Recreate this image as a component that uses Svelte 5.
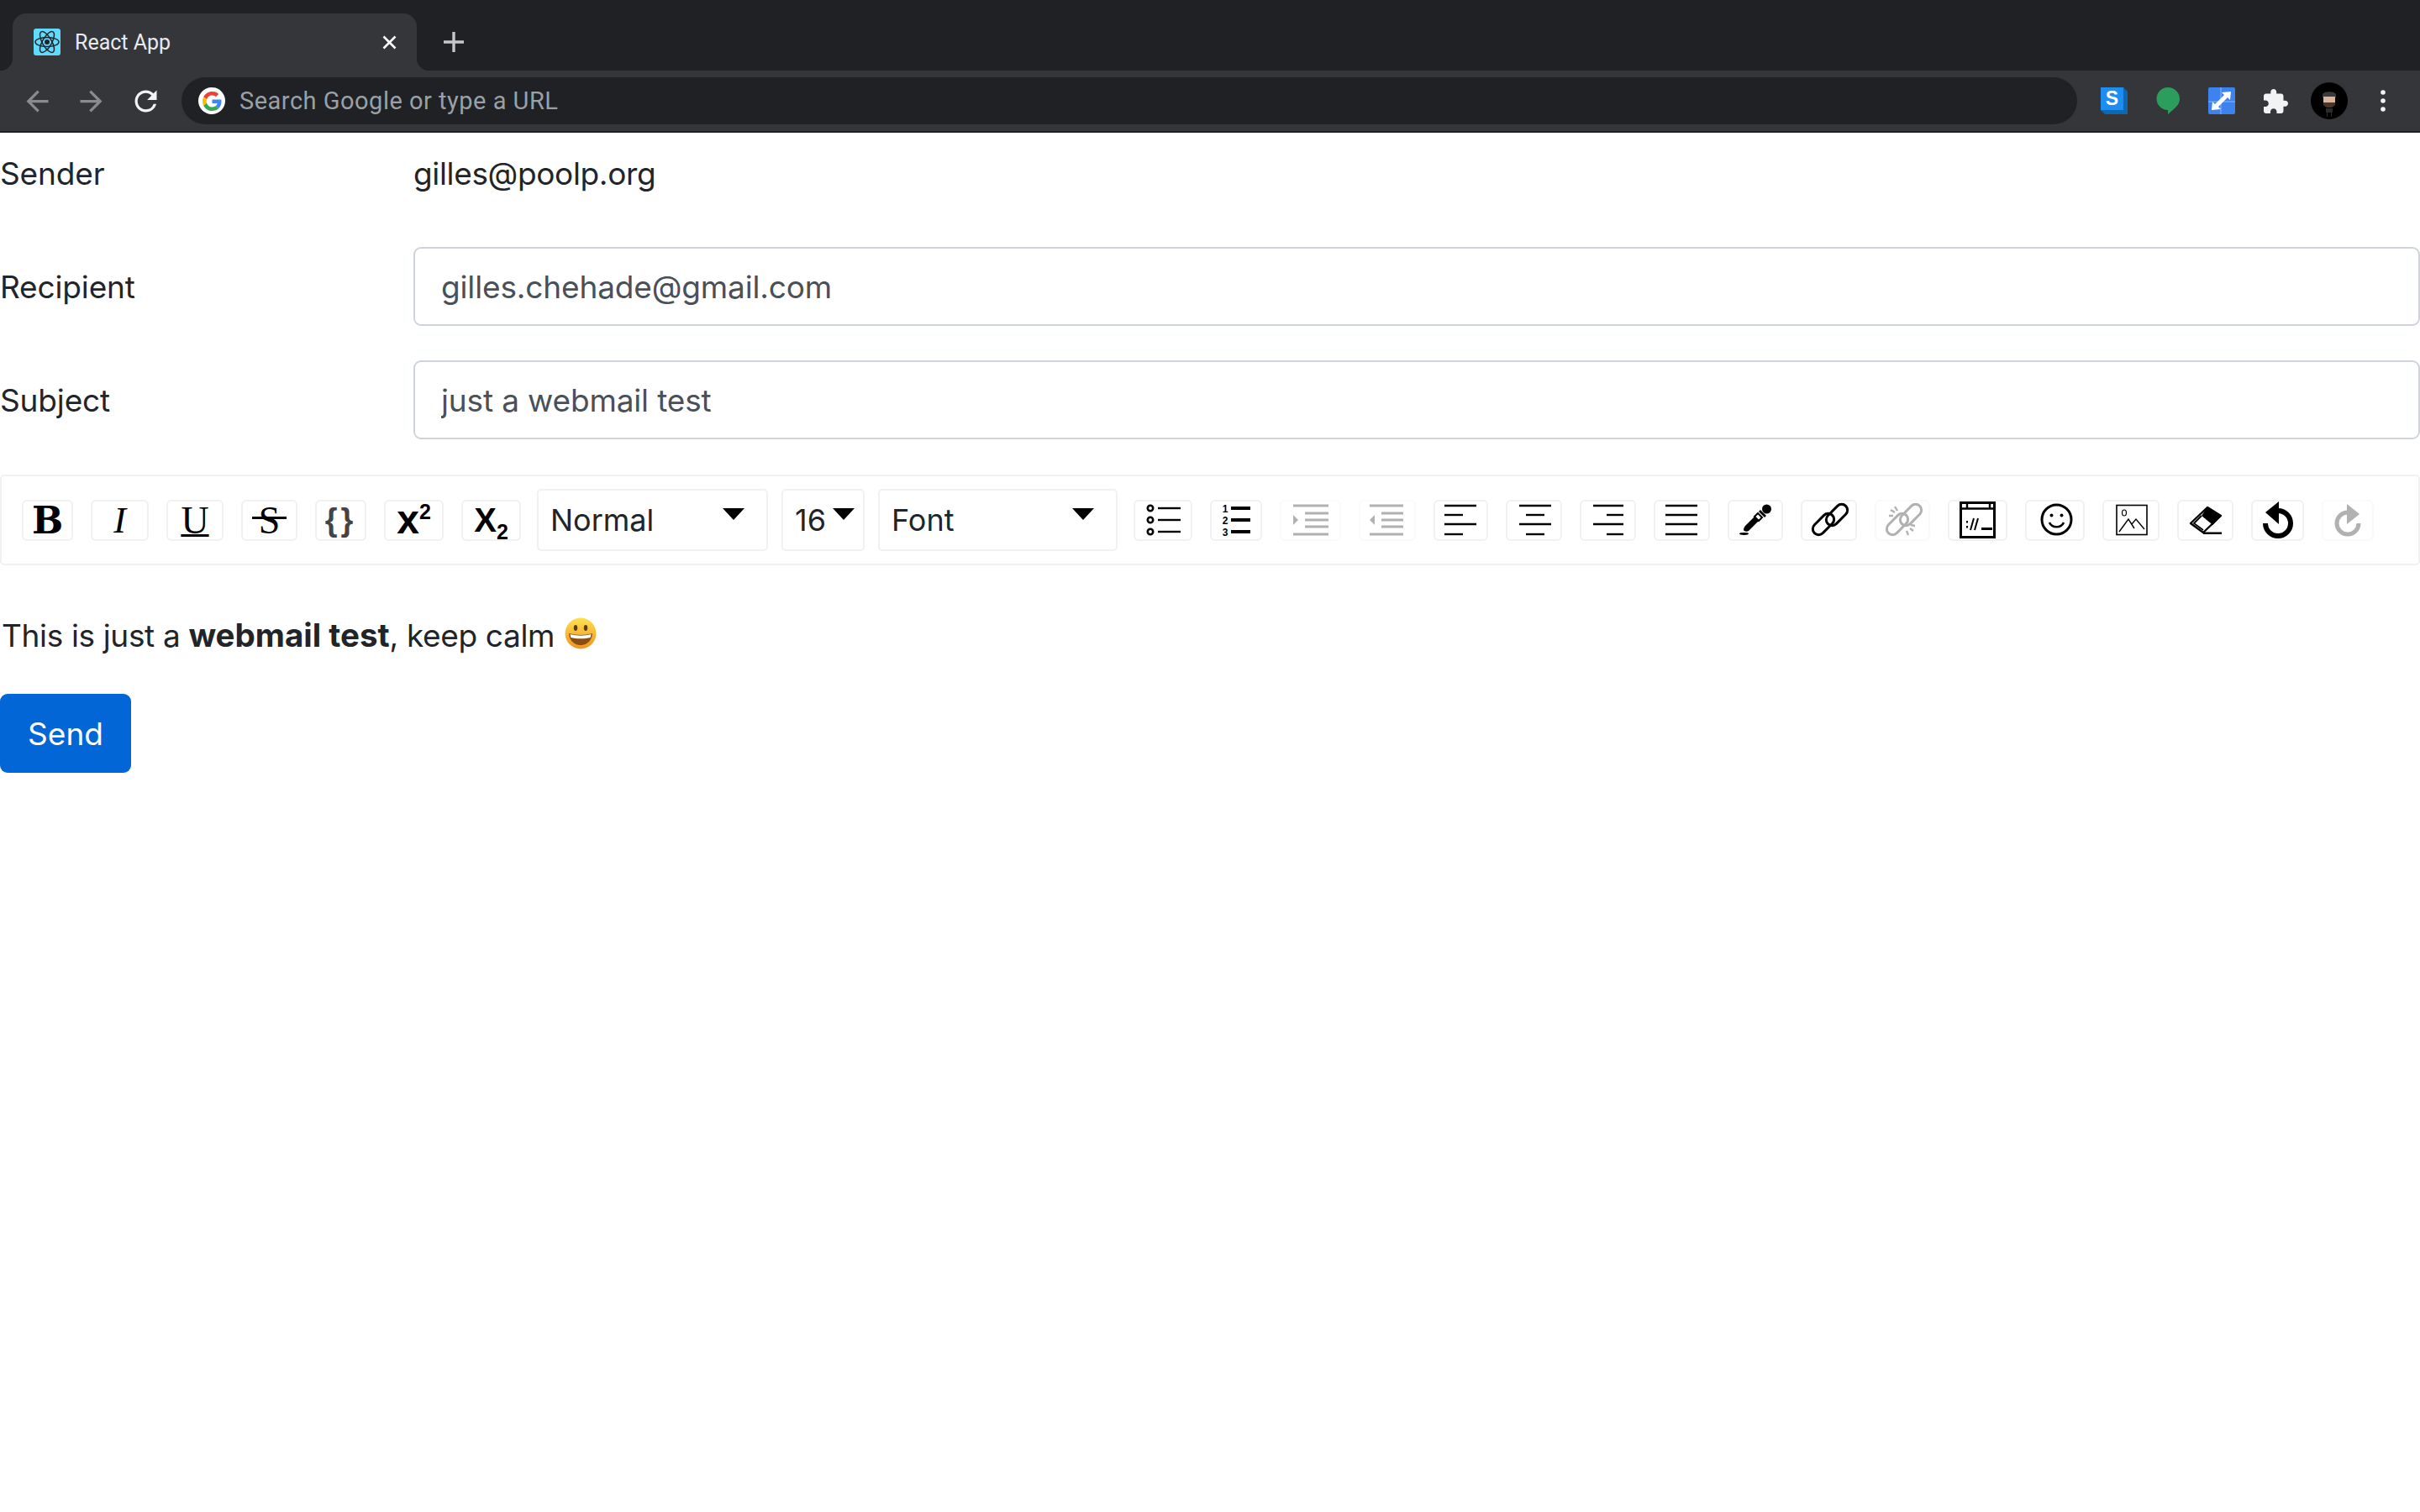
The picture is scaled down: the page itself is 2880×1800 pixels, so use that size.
<script>
  const before = [
    { id: 'bold', w: 61 }, { id: 'italic', w: 69 }, { id: 'underline', w: 68 }, { id: 'strike', w: 67 },
    { id: 'mono', w: 61 }, { id: 'sup', w: 71 }, { id: 'sub', w: 71 }
  ];
  const after = [
    { id: 'ul', w: 70 }, { id: 'ol', w: 62 }, { id: 'indent', w: 73, off: true }, { id: 'outdent', w: 68, off: true },
    { id: 'left', w: 65 }, { id: 'center', w: 67 }, { id: 'right', w: 67 }, { id: 'justify', w: 67 },
    { id: 'color', w: 66 }, { id: 'link', w: 67 }, { id: 'unlink', w: 66, off: true }, { id: 'embed', w: 71 },
    { id: 'emoji', w: 71 }, { id: 'image', w: 68 }, { id: 'eraser', w: 67 }, { id: 'undo', w: 63 }, { id: 'redo', w: 62, off: true }
  ];
</script>

{#snippet chain()}
  <g fill="none" stroke="#000" stroke-width="3">
    <rect x="36" y="3" width="14" height="30" rx="7" transform="rotate(45 43 18)" />
    <rect x="20" y="14" width="14" height="30" rx="7" transform="rotate(45 27 29)" />
  </g>
{/snippet}

{#snippet lines(rows)}
  {#each rows as r}
    <line x1={r[0]} x2={r[1]} y1={r[2]} y2={r[2]} stroke="#000" stroke-width={r[3] ?? 2.4} />
  {/each}
{/snippet}

{#snippet icon(t)}
  {#if t.id === 'bold'}
    <span class="glyph g-b">B</span>
  {:else if t.id === 'italic'}
    <span class="glyph g-i">I</span>
  {:else if t.id === 'underline'}
    <span class="glyph g-u">U</span>
  {:else if t.id === 'strike'}
    <span class="glyph g-s">S</span>
  {:else if t.id === 'mono'}
    <span class="glyph g-m">{'{}'}</span>
  {:else if t.id === 'sup'}
    <span class="glyph g-x g-sup">x<sup>2</sup></span>
  {:else if t.id === 'sub'}
    <span class="glyph g-x g-sub">X<sub>2</sub></span>
  {:else if t.id === 'ul'}
    <svg viewBox="0 0 70 49">
      <g fill="none" stroke="#000" stroke-width="2.6"><circle cx="20" cy="10" r="3.2" /><circle cx="20" cy="24" r="3.2" /><circle cx="20" cy="38" r="3.2" /></g>
      {@render lines([[29, 56, 10], [29, 56, 24], [29, 56, 38]])}
    </svg>
  {:else if t.id === 'ol'}
    <svg viewBox="0 0 62 49">
      <g font-family="Liberation Sans" font-size="12" font-weight="700" text-anchor="middle"><text x="18" y="15">1</text><text x="18" y="29">2</text><text x="18" y="43">3</text></g>
      {@render lines([[25, 48, 10, 4], [25, 48, 24, 4], [25, 48, 38, 4]])}
    </svg>
  {:else if t.id === 'indent'}
    <svg viewBox="0 0 73 49">
      {@render lines([[16, 58, 7, 3], [30, 58, 16, 3], [30, 58, 24, 3], [30, 58, 32, 3], [16, 58, 41, 3]])}
      <polygon points="16,18 22,24 16,30" />
    </svg>
  {:else if t.id === 'outdent'}
    <svg viewBox="0 0 68 49">
      {@render lines([[13, 53, 7, 3], [27, 53, 16, 3], [27, 53, 24, 3], [27, 53, 32, 3], [13, 53, 41, 3]])}
      <polygon points="19,18 13,24 19,30" />
    </svg>
  {:else if t.id === 'left'}
    <svg viewBox="0 0 65 49">{@render lines([[13, 51, 7], [13, 35, 18], [13, 51, 29], [13, 35, 41]])}</svg>
  {:else if t.id === 'center'}
    <svg viewBox="0 0 67 49">{@render lines([[16, 54, 7], [24, 46, 18], [16, 54, 29], [24, 46, 41]])}</svg>
  {:else if t.id === 'right'}
    <svg viewBox="0 0 67 49">{@render lines([[16, 52, 7], [32, 52, 18], [16, 52, 29], [32, 52, 41]])}</svg>
  {:else if t.id === 'justify'}
    <svg viewBox="0 0 67 49">{@render lines([[14, 52, 7], [14, 52, 18], [14, 52, 29], [14, 52, 41]])}</svg>
  {:else if t.id === 'color'}
    <svg viewBox="0 0 66 49">
      <circle cx="46.500" cy="11" r="5.500" />
      <path d="M39 12l7 7-2 2-7-7z" />
      <path d="M36 16l5 5-4 4-5-5z" fill="#fff" stroke="#000" stroke-width="2" />
      <path d="M32 20l5 5-12 12c-2 1-5 1-6-1 0-2 1-4 2-5z" />
      <ellipse cx="19.500" cy="40.500" rx="5.500" ry="1.400" />
    </svg>
  {:else if t.id === 'link'}
    <svg viewBox="0 0 67 49">{@render chain()}</svg>
  {:else if t.id === 'unlink'}
    <svg viewBox="0 0 66 49">
      {@render chain()}
      <g stroke="#000" stroke-width="2.4"><path d="M24 8l3 5M19 12l5 3M17 19h5M48 31l-5-1M46 37l-4-3M40 42l-2-5" /></g>
    </svg>
  {:else if t.id === 'embed'}
    <svg viewBox="0 0 71 49">
      <rect x="15.500" y="3.500" width="40" height="41" fill="none" stroke="#000" stroke-width="3" />
      <path d="M15 10.500h41M23 3v8M50 3v8" stroke="#000" stroke-width="2.400" fill="none" />
      <path d="M23 25v2.500M23 31v2.500M31 22l-4 14M36 22l-4 14" stroke="#000" stroke-width="2" fill="none" />
      <rect x="40" y="33" width="13" height="3" />
    </svg>
  {:else if t.id === 'emoji'}
    <svg viewBox="0 0 71 49">
      <circle cx="37.500" cy="23.500" r="17.500" fill="none" stroke="#000" stroke-width="3" />
      <circle cx="31.500" cy="18.500" r="2" /><circle cx="43.500" cy="18.500" r="2" />
      <path d="M29 27c3 7 14 7 17 0" fill="none" stroke="#000" stroke-width="2.600" />
    </svg>
  {:else if t.id === 'image'}
    <svg viewBox="0 0 68 49">
      <rect x="17" y="6.500" width="36" height="35" fill="none" stroke="#000" stroke-width="1.600" />
      <ellipse cx="26" cy="15.500" rx="2.500" ry="3.500" fill="none" stroke="#000" stroke-width="1.200" />
      <path d="M20 38l11-15 7 11M35 29l5-6 10 12" fill="none" stroke="#000" stroke-width="1.400" />
    </svg>
  {:else if t.id === 'eraser'}
    <svg viewBox="0 0 67 49">
      <path d="M36 9l16 10-21 20-15-11z" fill="#fff" stroke="#000" stroke-width="2.400" stroke-linejoin="round" />
      <path d="M36 8l16.500 10.500-10 11.500-13.500-11z" />
      <path d="M29 19l-9 9 11 8" fill="none" stroke="#000" stroke-width="1.800" />
      <rect x="31" y="38.500" width="22" height="2.500" />
    </svg>
  {:else if t.id === 'undo'}
    <svg viewBox="0 0 63 49">
      <polygon points="33,2 17,15 33,29" />
      <path d="M32 13A15 15 0 1 1 17 28" fill="none" stroke="#000" stroke-width="6" />
    </svg>
  {:else if t.id === 'redo'}
    <svg viewBox="0 0 62 49">
      <polygon points="30,5 45,17 30,29" />
      <path d="M31 15A13 13 0 1 0 44 28" fill="none" stroke="#000" stroke-width="5" />
    </svg>
  {/if}
{/snippet}

<div class="chrome">
  <div class="tabstrip">
    <div class="tab">
      <svg class="favicon" viewBox="0 0 32 32">
        <rect width="32" height="32" rx="3" fill="#61dafb" />
        <g fill="none" stroke="#20232a" stroke-width="1.500">
          <ellipse cx="16" cy="16" rx="14" ry="5.500" />
          <ellipse cx="16" cy="16" rx="14" ry="5.500" transform="rotate(60 16 16)" />
          <ellipse cx="16" cy="16" rx="14" ry="5.500" transform="rotate(120 16 16)" />
        </g>
        <circle cx="16" cy="16" r="3" fill="#20232a" />
      </svg>
      <span class="tab-title">React App</span>
      <svg class="tab-close" viewBox="0 0 17 17"><path d="M1.500 1.500l14 14M15.500 1.500l-14 14" stroke="#fff" stroke-width="2.600" /></svg>
    </div>
    <svg class="newtab" viewBox="0 0 24 24"><path d="M12 0v24M0 12h24" stroke="#c4c6ca" stroke-width="3.400" /></svg>
  </div>
  <div class="toolbar">
    <svg class="nav back" viewBox="0 0 24 24"><path d="M20 11H7.830l5.590-5.590L12 4l-8 8 8 8 1.410-1.410L7.830 13H20v-2z" /></svg>
    <svg class="nav fwd" viewBox="0 0 24 24"><path d="M4 11h12.170l-5.590-5.590L12 4l8 8-8 8-1.410-1.410L16.170 13H4v-2z" /></svg>
    <svg class="nav reload" viewBox="0 0 24 24"><path d="M17.650 6.350A7.958 7.958 0 0012 4c-4.420 0-7.990 3.580-7.990 8s3.570 8 7.990 8c3.730 0 6.840-2.550 7.730-6h-2.080A5.990 5.990 0 0112 18c-3.310 0-6-2.690-6-6s2.690-6 6-6c1.660 0 3.140.690 4.220 1.780L13 11h7V4l-2.350 2.350z" /></svg>
    <div class="omnibox">
      <span class="g-badge">
        <svg viewBox="0 0 48 48">
          <path fill="#ea4335" d="M24 9.500c3.540 0 6.710 1.220 9.210 3.600l6.850-6.850C35.900 2.380 30.470 0 24 0 14.620 0 6.510 5.380 2.560 13.220l7.980 6.190C12.430 13.720 17.740 9.500 24 9.500z" />
          <path fill="#4285f4" d="M46.980 24.550c0-1.570-.150-3.090-.380-4.550H24v9.020h12.940c-.580 2.960-2.260 5.480-4.780 7.180l7.730 6c4.510-4.180 7.090-10.360 7.090-17.650z" />
          <path fill="#fbbc05" d="M10.530 28.590c-.480-1.450-.760-2.990-.760-4.590s.270-3.140.760-4.590l-7.980-6.190C.920 16.460 0 20.120 0 24c0 3.880.920 7.540 2.560 10.780l7.970-6.190z" />
          <path fill="#34a853" d="M24 48c6.480 0 11.930-2.130 15.890-5.810l-7.730-6c-2.150 1.450-4.920 2.300-8.160 2.300-6.260 0-11.570-4.220-13.470-9.910l-7.980 6.190C6.510 42.620 14.620 48 24 48z" />
        </svg>
      </span>
      <span class="omni-text">Search Google or type a URL</span>
    </div>
    <div class="extensions">
      <svg class="ext" viewBox="0 0 32 32">
        <path d="M0 0h27l5 5v27H5l-5-5z" fill="#0e68b0" />
        <rect width="27" height="27" fill="#1d8df0" />
        <text x="13.500" y="21" text-anchor="middle" font-family="Liberation Sans" font-weight="700" font-size="23" fill="#fff">S</text>
      </svg>
      <svg class="ext ext-green" viewBox="0 0 28 32"><path d="M14 0a14 14 0 0 1 14 14c0 7-6 11-14 18v-5A13.500 13.500 0 0 1 14 0z" fill="#2b9d5d" /></svg>
      <svg class="ext" viewBox="0 0 32 32">
        <rect width="32" height="32" rx="2" fill="#3d83ef" />
        <path d="M15 0v32M0 17h32" stroke="#8db6f6" stroke-width="1" />
        <path d="M27 5l-1 10-3-3-11 11 3 3-11 1 1-10 3 3 11-11-3-3z" fill="#fff" />
      </svg>
      <svg class="ext ext-puzzle" viewBox="2 1 21 21"><path d="M20.500 11H19V7c0-1.100-.9-2-2-2h-4V3.500C13 2.120 11.880 1 10.500 1S8 2.120 8 3.500V5H4c-1.100 0-1.990.9-1.990 2v3.800H3.500c1.490 0 2.700 1.210 2.700 2.700s-1.210 2.700-2.700 2.700H2V20c0 1.100.9 2 2 2h3.800v-1.500c0-1.490 1.210-2.700 2.700-2.700 1.490 0 2.700 1.210 2.700 2.700V22H17c1.100 0 2-.9 2-2v-4h1.500c1.380 0 2.500-1.120 2.500-2.500S21.880 11 20.500 11z" fill="#f1f3f4" /></svg>
      <svg class="avatar" viewBox="0 0 44 44">
        <circle cx="22" cy="22" r="22" fill="#000" />
        <path d="M14 15c0-5 16-5 16 0v3H14z" fill="#3a3a3a" />
        <rect x="15" y="17" width="14" height="9" fill="#d9b59c" />
        <path d="M15 24h14v3l-4 3h-6l-4-3z" fill="#4a3527" />
        <path d="M18 31h8v5h-1v5h-1v-5h-4v5h-1v-5h-1z" fill="#2b2b2b" />
      </svg>
      <svg class="dots" viewBox="0 0 6 26"><circle cx="3" cy="3" r="2.800" /><circle cx="3" cy="13" r="2.800" /><circle cx="3" cy="23" r="2.800" /></svg>
    </div>
  </div>
</div>

<form class="mail">
  <div class="row">
    <span class="label">Sender</span>
    <span class="plain">gilles@poolp.org</span>
  </div>
  <div class="row">
    <label class="label" for="to">Recipient</label>
    <input id="to" class="field" value="gilles.chehade@gmail.com" />
  </div>
  <div class="row row-subject">
    <label class="label" for="subject">Subject</label>
    <input id="subject" class="field" value="just a webmail test" />
  </div>

  <div class="editor-toolbar">
    {#each before as t}
      <div class="tool" style="width: {t.w}px">{@render icon(t)}</div>
    {/each}
    <div class="select s-block"><span>Normal</span><i></i></div>
    <div class="select s-size"><span>16</span><i></i></div>
    <div class="select s-font"><span>Font</span><i></i></div>
    {#each after as t}
      <div class="tool" class:off={t.off} style="width: {t.w}px">{@render icon(t)}</div>
    {/each}
  </div>

  <p class="body-text">
    This is just a <strong>webmail test</strong>, keep calm
    <svg class="smile" viewBox="0 0 38 38">
      <defs>
        <linearGradient id="face" x1="0" y1="0" x2="0" y2="1"><stop offset="0" stop-color="#fde14f" /><stop offset="1" stop-color="#f0931e" /></linearGradient>
      </defs>
      <circle cx="19" cy="19" r="18.500" fill="url(#face)" />
      <ellipse cx="13" cy="12.500" rx="2.200" ry="3.400" fill="#5b3a12" />
      <ellipse cx="25" cy="12.500" rx="2.200" ry="3.400" fill="#5b3a12" />
      <path d="M5 19c9 2.500 19 2.500 28 0-.5 9-7 14-14 14S5.500 28 5 19z" fill="#8a4d14" />
      <path d="M6.500 20c8 2.200 17 2.200 25 0l-.8 4c-7 1.800-16.400 1.800-23.400 0z" fill="#fff" />
    </svg>
  </p>

  <button class="send" type="button">Send</button>
</form>

<style>
  :global(body) {
    background: #fff;
    font-family: Inter, "Liberation Sans", sans-serif;
    color: #212529;
  }

  /* browser frame */
  .chrome { font-family: Roboto, Inter, sans-serif; }

  .tabstrip {
    height: 84px;
    background: #202124;
    display: flex;
    align-items: flex-end;
    padding-left: 15px;
  }

  .tab {
    position: relative;
    width: 481px;
    height: 68px;
    box-sizing: border-box;
    background: #35363a;
    border-radius: 16px 16px 0 0;
    display: flex;
    align-items: center;
    padding: 0 24px 0 25px;
  }

  .tab::before,
  .tab::after {
    content: '';
    position: absolute;
    bottom: 0;
    width: 15px;
    height: 15px;
  }
  .tab::before { left: -15px; background: radial-gradient(circle at 0 0, transparent 15px, #35363a 15.500px); }
  .tab::after { right: -15px; background: radial-gradient(circle at 100% 0, transparent 15px, #35363a 15.500px); }

  .favicon { width: 32px; height: 32px; flex: none; }

  .tab-title {
    margin-left: 17px;
    flex: 1;
    color: #e8eaed;
    font-size: 25px;
  }

  .tab-close { width: 17px; height: 17px; flex: none; }

  .newtab { width: 24px; height: 24px; margin: 0 0 22px 32px; }

  .toolbar {
    height: 72px;
    background: #35363a;
    border-bottom: 2px solid #202124;
    box-sizing: content-box;
    display: flex;
    align-items: center;
  }

  .nav { width: 39px; height: 39px; fill: #898b8e; flex: none; }
  .back { margin-left: 25px; }
  .fwd { margin-left: 25px; }
  .reload { margin-left: 26px; fill: #f1f3f4; }

  .omnibox {
    width: 2256px;
    height: 56px;
    margin-left: 23px;
    flex: none;
    background: #202124;
    border-radius: 28px;
    display: flex;
    align-items: center;
    padding-left: 20px;
    box-sizing: border-box;
  }

  .g-badge {
    width: 32px;
    height: 32px;
    border-radius: 50%;
    background: #fff;
    display: flex;
    align-items: center;
    justify-content: center;
  }
  .g-badge svg { width: 23px; height: 23px; }

  .omni-text {
    margin-left: 17px;
    color: #9aa0a6;
    font-size: 29px;
    letter-spacing: 0.5px;
  }

  .extensions {
    display: flex;
    align-items: center;
    margin-left: 28px;
  }

  .ext { width: 32px; height: 32px; margin-right: 34px; }
  .ext-green { width: 28px; margin-right: 34px; margin-left: 0; }
  .ext-puzzle { width: 29px; height: 29px; margin-right: 27px; }
  .avatar { width: 44px; height: 44px; }
  .dots { width: 6px; height: 26px; margin-left: 39px; fill: #f1f3f4; }

  /* form */
  .mail { display: flex; flex-direction: column; }

  .row {
    display: grid;
    grid-template-columns: 492px 1fr;
    align-items: center;
    min-height: 93px;
    font-size: 37px;
    letter-spacing: -0.15px;
    margin-bottom: 41px;
  }
  .row:first-child { margin-top: 2px; }
  .row-subject { margin-bottom: 42px; }
  .plain { letter-spacing: -0.35px; }

  .field {
    height: 94px;
    box-sizing: border-box;
    width: 100%;
    border: 2px solid #ced4da;
    border-radius: 9px;
    padding: 0 31px;
    color: #495057;
    font: inherit;
    letter-spacing: inherit;
    outline: none;
  }

  .editor-toolbar {
    height: 108px;
    box-sizing: border-box;
    border: 2px solid #f1f1f1;
    border-radius: 5px;
    display: flex;
    align-items: center;
    gap: 21px;
    padding-left: 24px;
    font-size: 36px;
  }

  .tool {
    flex: none;
    height: 49px;
    box-shadow: inset 0 0 0 2px #f1f1f1;
    border-radius: 6px;
    display: flex;
    align-items: center;
    justify-content: center;
  }
  .tool.off { opacity: 0.3; }
  .tool svg { width: 100%; height: 100%; overflow: visible; }

  .glyph { line-height: 1; color: #000; white-space: nowrap; }
  .g-b { font: 700 44px "DejaVu Serif", serif; }
  .g-i { font: italic 400 44px "Liberation Serif", serif; }
  .g-u { font: 400 46px "Liberation Serif", serif; text-decoration: underline; text-decoration-thickness: 3px; text-underline-offset: 1px; }
  .g-s { position: relative; font: 400 46px "Liberation Serif", serif; }
  .g-s::after {
    content: '';
    position: absolute;
    left: -8px;
    right: -8px;
    top: 22px;
    height: 3px;
    background: #000;
  }
  .g-m { font: 700 38px "Liberation Sans", sans-serif; color: #444; letter-spacing: 4px; }
  .g-x { font-family: "Liberation Sans", sans-serif; font-weight: 700; }
  .g-sup { font-size: 48px; }
  .g-sub { font-size: 40px; }
  .g-x sup, .g-x sub { font-size: 25px; line-height: 0; }
  .g-x sup { vertical-align: 17px; }
  .g-x sub { vertical-align: -9px; }

  .select {
    flex: none;
    height: 74px;
    box-sizing: border-box;
    border: 2px solid #f1f1f1;
    border-radius: 5px;
    display: flex;
    align-items: center;
    justify-content: space-between;
    padding: 0 26px 0 14px;
  }
  .select i {
    border-top: 14px solid #000;
    border-left: 13px solid transparent;
    border-right: 13px solid transparent;
    margin-bottom: 14px;
  }
  .s-block { width: 275px; margin: 0 -2px; }
  .s-size { width: 99px; padding-right: 10px; margin: 0 -2px 0 -3px; }
  .s-font { width: 285px; margin: 0 -2px 0 -3px; }

  .body-text {
    margin: 60px 0 0 2px;
    height: 46px;
    font-size: 37px;
    line-height: 46px;
    letter-spacing: -0.35px;
    white-space: nowrap;
    display: block;
  }
  .body-text strong { font-weight: 700; font-size: 38.500px; letter-spacing: 0; }
  .smile { width: 38px; height: 38px; vertical-align: -3px; margin-left: 2px; }

  .send {
    margin-top: 47px;
    width: 156px;
    height: 94px;
    background: #0366d6;
    color: #fff;
    border: 0;
    border-radius: 9px;
    font: 400 37px Inter, sans-serif;
    padding: 0;
  }
</style>
